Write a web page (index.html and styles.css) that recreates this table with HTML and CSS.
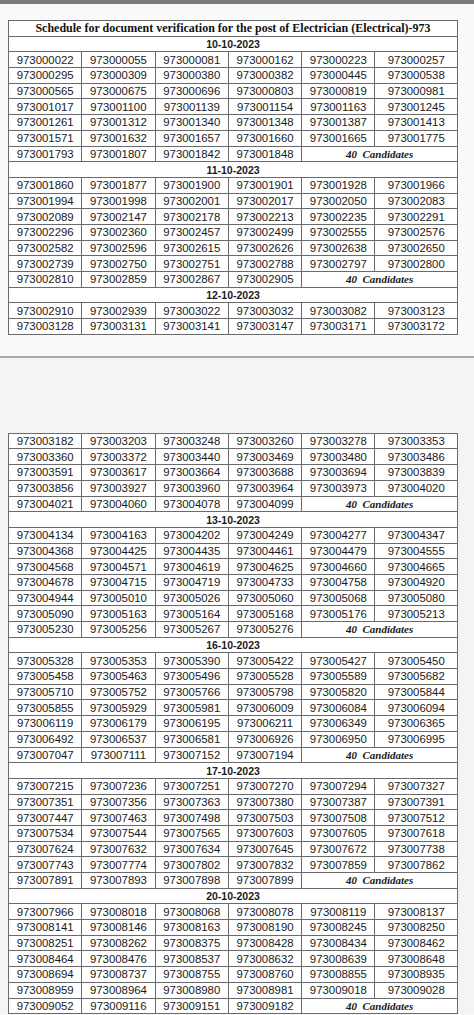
FILE: index.html
```html
<!DOCTYPE html>
<html lang="en">
<head>
<meta charset="utf-8">
<title>Schedule for document verification</title>
<link rel="stylesheet" href="styles.css">
</head>
<body>
<div class="topbar"></div>
<section class="sheet sheet-one">
<table class="sched">
<colgroup><col class="c"><col class="c"><col class="c"><col class="c"><col class="c"><col class="last"></colgroup>
<tr><td colspan="6" class="title">Schedule for document verification for the post of Electrician (Electrical)-973</td></tr>
<tr><td colspan="6" class="date">10-10-2023</td></tr>
<tr><td>973000022</td><td>973000055</td><td>973000081</td><td>973000162</td><td>973000223</td><td>973000257</td></tr>
<tr><td>973000295</td><td>973000309</td><td>973000380</td><td>973000382</td><td>973000445</td><td>973000538</td></tr>
<tr><td>973000565</td><td>973000675</td><td>973000696</td><td>973000803</td><td>973000819</td><td>973000981</td></tr>
<tr><td>973001017</td><td>973001100</td><td>973001139</td><td>973001154</td><td>973001163</td><td>973001245</td></tr>
<tr><td>973001261</td><td>973001312</td><td>973001340</td><td>973001348</td><td>973001387</td><td>973001413</td></tr>
<tr><td>973001571</td><td>973001632</td><td>973001657</td><td>973001660</td><td>973001665</td><td>973001775</td></tr>
<tr><td>973001793</td><td>973001807</td><td>973001842</td><td>973001848</td><td colspan="2" class="count">40&nbsp; Candidates</td></tr>
<tr><td colspan="6" class="date">11-10-2023</td></tr>
<tr><td>973001860</td><td>973001877</td><td>973001900</td><td>973001901</td><td>973001928</td><td>973001966</td></tr>
<tr><td>973001994</td><td>973001998</td><td>973002001</td><td>973002017</td><td>973002050</td><td>973002083</td></tr>
<tr><td>973002089</td><td>973002147</td><td>973002178</td><td>973002213</td><td>973002235</td><td>973002291</td></tr>
<tr><td>973002296</td><td>973002360</td><td>973002457</td><td>973002499</td><td>973002555</td><td>973002576</td></tr>
<tr><td>973002582</td><td>973002596</td><td>973002615</td><td>973002626</td><td>973002638</td><td>973002650</td></tr>
<tr><td>973002739</td><td>973002750</td><td>973002751</td><td>973002788</td><td>973002797</td><td>973002800</td></tr>
<tr><td>973002810</td><td>973002859</td><td>973002867</td><td>973002905</td><td colspan="2" class="count">40&nbsp; Candidates</td></tr>
<tr><td colspan="6" class="date">12-10-2023</td></tr>
<tr><td>973002910</td><td>973002939</td><td>973003022</td><td>973003032</td><td>973003082</td><td>973003123</td></tr>
<tr><td>973003128</td><td>973003131</td><td>973003141</td><td>973003147</td><td>973003171</td><td>973003172</td></tr>
</table>
</section>
<div class="divider"></div>
<section class="sheet sheet-two">
<table class="sched">
<colgroup><col class="c"><col class="c"><col class="c"><col class="c"><col class="c"><col class="last"></colgroup>
<tr><td>973003182</td><td>973003203</td><td>973003248</td><td>973003260</td><td>973003278</td><td>973003353</td></tr>
<tr><td>973003360</td><td>973003372</td><td>973003440</td><td>973003469</td><td>973003480</td><td>973003486</td></tr>
<tr><td>973003591</td><td>973003617</td><td>973003664</td><td>973003688</td><td>973003694</td><td>973003839</td></tr>
<tr><td>973003856</td><td>973003927</td><td>973003960</td><td>973003964</td><td>973003973</td><td>973004020</td></tr>
<tr><td>973004021</td><td>973004060</td><td>973004078</td><td>973004099</td><td colspan="2" class="count">40&nbsp; Candidates</td></tr>
<tr><td colspan="6" class="date">13-10-2023</td></tr>
<tr><td>973004134</td><td>973004163</td><td>973004202</td><td>973004249</td><td>973004277</td><td>973004347</td></tr>
<tr><td>973004368</td><td>973004425</td><td>973004435</td><td>973004461</td><td>973004479</td><td>973004555</td></tr>
<tr><td>973004568</td><td>973004571</td><td>973004619</td><td>973004625</td><td>973004660</td><td>973004665</td></tr>
<tr><td>973004678</td><td>973004715</td><td>973004719</td><td>973004733</td><td>973004758</td><td>973004920</td></tr>
<tr><td>973004944</td><td>973005010</td><td>973005026</td><td>973005060</td><td>973005068</td><td>973005080</td></tr>
<tr><td>973005090</td><td>973005163</td><td>973005164</td><td>973005168</td><td>973005176</td><td>973005213</td></tr>
<tr><td>973005230</td><td>973005256</td><td>973005267</td><td>973005276</td><td colspan="2" class="count">40&nbsp; Candidates</td></tr>
<tr><td colspan="6" class="date">16-10-2023</td></tr>
<tr><td>973005328</td><td>973005353</td><td>973005390</td><td>973005422</td><td>973005427</td><td>973005450</td></tr>
<tr><td>973005458</td><td>973005463</td><td>973005496</td><td>973005528</td><td>973005589</td><td>973005682</td></tr>
<tr><td>973005710</td><td>973005752</td><td>973005766</td><td>973005798</td><td>973005820</td><td>973005844</td></tr>
<tr><td>973005855</td><td>973005929</td><td>973005981</td><td>973006009</td><td>973006084</td><td>973006094</td></tr>
<tr><td>973006119</td><td>973006179</td><td>973006195</td><td>973006211</td><td>973006349</td><td>973006365</td></tr>
<tr><td>973006492</td><td>973006537</td><td>973006581</td><td>973006926</td><td>973006950</td><td>973006995</td></tr>
<tr><td>973007047</td><td>973007111</td><td>973007152</td><td>973007194</td><td colspan="2" class="count">40&nbsp; Candidates</td></tr>
<tr><td colspan="6" class="date">17-10-2023</td></tr>
<tr><td>973007215</td><td>973007236</td><td>973007251</td><td>973007270</td><td>973007294</td><td>973007327</td></tr>
<tr><td>973007351</td><td>973007356</td><td>973007363</td><td>973007380</td><td>973007387</td><td>973007391</td></tr>
<tr><td>973007447</td><td>973007463</td><td>973007498</td><td>973007503</td><td>973007508</td><td>973007512</td></tr>
<tr><td>973007534</td><td>973007544</td><td>973007565</td><td>973007603</td><td>973007605</td><td>973007618</td></tr>
<tr><td>973007624</td><td>973007632</td><td>973007634</td><td>973007645</td><td>973007672</td><td>973007738</td></tr>
<tr><td>973007743</td><td>973007774</td><td>973007802</td><td>973007832</td><td>973007859</td><td>973007862</td></tr>
<tr><td>973007891</td><td>973007893</td><td>973007898</td><td>973007899</td><td colspan="2" class="count">40&nbsp; Candidates</td></tr>
<tr><td colspan="6" class="date">20-10-2023</td></tr>
<tr><td>973007966</td><td>973008018</td><td>973008068</td><td>973008078</td><td>973008119</td><td>973008137</td></tr>
<tr><td>973008141</td><td>973008146</td><td>973008163</td><td>973008190</td><td>973008245</td><td>973008250</td></tr>
<tr><td>973008251</td><td>973008262</td><td>973008375</td><td>973008428</td><td>973008434</td><td>973008462</td></tr>
<tr><td>973008464</td><td>973008476</td><td>973008537</td><td>973008632</td><td>973008639</td><td>973008648</td></tr>
<tr><td>973008694</td><td>973008737</td><td>973008755</td><td>973008760</td><td>973008855</td><td>973008935</td></tr>
<tr><td>973008959</td><td>973008964</td><td>973008980</td><td>973008981</td><td>973009018</td><td>973009028</td></tr>
<tr><td>973009052</td><td>973009116</td><td>973009151</td><td>973009182</td><td colspan="2" class="count">40&nbsp; Candidates</td></tr>
</table>
</section>
</body>
</html>
```
FILE: styles.css
```css
html, body {
  margin: 0;
  padding: 0;
  overflow: hidden;
}
body {
  background: #f7f7f7;
  font-family: "Liberation Sans", Arial, sans-serif;
  color: #1a1a1a;
  width: 474px;
}
.topbar {
  height: 4px;
  background: #7a7a7a;
}
.sheet {
  padding-left: 8px;
}
.sheet-one {
  padding-top: 16px;
  padding-bottom: 21px;
  background: #f9f9f9;
}
.divider {
  height: 2px;
  background: #a9a9a9;
}
.sheet-two {
  padding-top: 75px;
  background: #f4f4f4;
}
.sched {
  width: 449px;
  table-layout: fixed;
  border-collapse: collapse;
  background: #ffffff;
  border: 1px solid #5a5a5a;
}
.sched .c {
  width: 73.3px;
}
.sched .last {
  width: 82.5px;
}
.sched td {
  height: 14.7px;
  padding: 0;
  border: 1px solid #6a6a6a;
  text-align: center;
  vertical-align: middle;
  font-size: 11.4px;
  line-height: 14px;
  white-space: nowrap;
  overflow: hidden;
}
.sched .title {
  font-family: "Liberation Serif", "Times New Roman", serif;
  font-weight: bold;
  font-size: 12px;
  color: #111;
}
.sched .date {
  font-weight: bold;
  font-size: 10.5px;
}
.sched .count {
  font-family: "Liberation Serif", "Times New Roman", serif;
  font-weight: bold;
  font-style: italic;
  font-size: 11px;
}
```
